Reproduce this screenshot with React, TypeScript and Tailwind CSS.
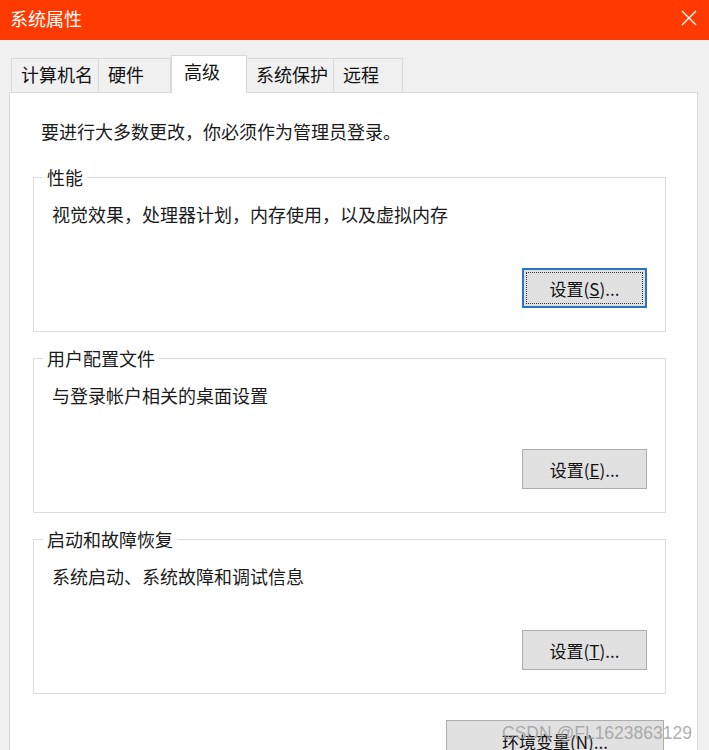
import type { ReactNode } from "react";

const FONT = { fontFamily: '"Microsoft YaHei", "Noto Sans CJK SC", "Noto Sans", sans-serif' };

const TABS = [
  { label: "计算机名", w: "w-[88px]" },
  { label: "硬件", w: "w-[72px]" },
  { label: "高级", w: "w-[76px]", active: true },
  { label: "系统保护", w: "w-[87px]" },
  { label: "远程", w: "w-[69px]" },
];

function WinButton({ children, primary }: { children: ReactNode; primary?: boolean }) {
  if (primary) {
    return (
      <button className="h-[40px] w-[125px] border-2 border-[#2a74c4] bg-[#e1e1e1] p-[2px]">
        <span className="flex h-full w-full items-center justify-center border border-dotted border-[#333] text-[17px] leading-none text-[#111]">
          {children}
        </span>
      </button>
    );
  }
  return (
    <button className="flex h-[40px] w-[125px] items-center justify-center border border-[#adadad] bg-[#e1e1e1] text-[17px] leading-none text-[#111]">
      {children}
    </button>
  );
}

function Group({ title, text, button }: { title: string; text: string; button: ReactNode }) {
  return (
    <div className="relative border border-[#dcdcdc] pt-[24px] pb-[23px] pr-[18px] pl-[18px]">
      <span className="absolute -top-[13px] left-[9px] bg-white px-[4px] text-[18px] leading-[24px] text-[#1a1a1a]">{title}</span>
      <p className="text-[18px] leading-[24px] text-[#1a1a1a]">{text}</p>
      <div className="mt-[42px] flex justify-end">{button}</div>
    </div>
  );
}

export default function App() {
  return (
    <div className="relative h-[750px] w-[709px] overflow-hidden bg-[#f0f0f0]" style={FONT}>
      {/* title bar */}
      <div className="flex h-[40px] items-center justify-between bg-[#ff3a00] pb-[4px] pl-[10px] pr-[12px]">
        <span className="text-[18px] leading-none text-white">系统属性</span>
        <svg width="16" height="16" viewBox="0 0 16 16" className="text-white">
          <path d="M1 1L15 15M15 1L1 15" stroke="currentColor" strokeWidth="1.4" fill="none" />
        </svg>
      </div>

      {/* tabs */}
      <div className="flex items-end pl-[11px] pt-[15px]">
        {TABS.map((t, i) =>
          t.active ? (
            <div
              key={t.label}
              className={`relative z-10 -mb-px flex h-[38px] ${t.w} items-start border-x border-t border-[#d9d9d9] bg-white pl-[12px] pt-[3px] text-[18px] leading-[24px] text-[#111]`}
            >
              {t.label}
            </div>
          ) : (
            <div
              key={t.label}
              className={`flex h-[34px] ${t.w} items-center border-t border-r border-[#d9d9d9] ${i === 0 ? "border-l" : ""} bg-[#f0f0f0] pb-[4px] pl-[9px] text-[18px] leading-[24px] text-[#111]`}
            >
              {t.label}
            </div>
          )
        )}
      </div>

      {/* panel */}
      <div className="ml-[9px] mr-[11px] h-[700px] border border-[#d9d9d9] bg-white pl-[23px] pr-[31px] pt-[26px]">
        <p className="pl-[8px] text-[18px] leading-[24px] text-[#1a1a1a]">要进行大多数更改，你必须作为管理员登录。</p>

        <div className="mt-[34px] flex flex-col gap-[26px]">
          <Group
            title="性能"
            text="视觉效果，处理器计划，内存使用，以及虚拟内存"
            button={<WinButton primary>设置(<u>S</u>)...</WinButton>}
          />
          <Group
            title="用户配置文件"
            text="与登录帐户相关的桌面设置"
            button={<WinButton>设置(<u>E</u>)...</WinButton>}
          />
          <Group
            title="启动和故障恢复"
            text="系统启动、系统故障和调试信息"
            button={<WinButton>设置(<u>T</u>)...</WinButton>}
          />
          <div className="flex justify-end pr-[2px]">
            <button className="flex h-[40px] w-[218px] items-center justify-center border border-[#adadad] bg-[#e1e1e1] pt-[2px] text-[17px] leading-none text-[#111]">
              环境变量(<u>N</u>)...
            </button>
          </div>
        </div>
      </div>

      {/* watermark */}
      <span
        className="absolute left-[502px] top-[721px] text-[17.5px] leading-[24px] text-[#9a9a9a]/80"
        style={{ fontFamily: '"Liberation Sans", Arial, sans-serif' }}
      >
        CSDN @FL1623863129
      </span>
    </div>
  );
}
